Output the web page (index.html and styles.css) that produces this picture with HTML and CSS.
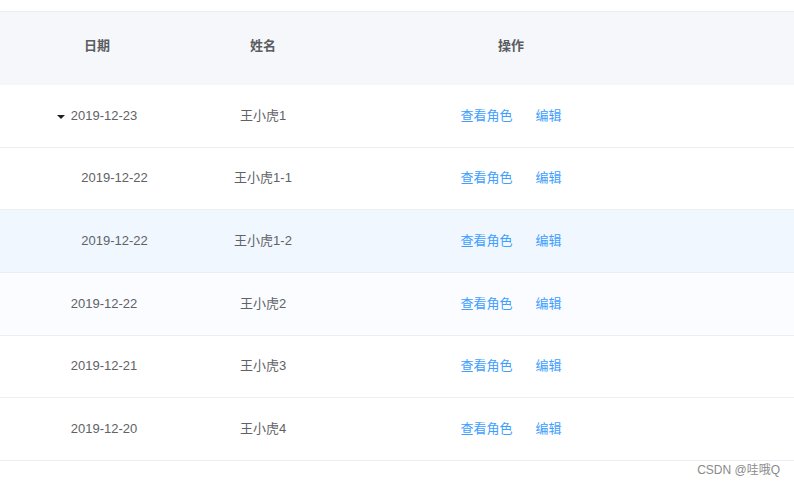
FILE: index.html
```html
<!DOCTYPE html>
<html lang="zh">
<head>
<meta charset="utf-8">
<link rel="stylesheet" href="styles.css">
</head>
<body>
<div class="table">
  <div class="row head">
    <div class="cell">日期</div>
    <div class="cell">姓名</div>
    <div class="cell">操作</div>
    <div class="cell"></div>
  </div>
  <div class="row">
    <div class="cell"><span class="lead"><span class="caret"></span></span><span class="date">2019-12-23</span></div>
    <div class="cell">王小虎1</div>
    <div class="cell ops"><a>查看角色</a><a>编辑</a></div>
    <div class="cell"></div>
  </div>
  <div class="row short">
    <div class="cell"><span class="indent"></span><span class="lead"></span><span class="date">2019-12-22</span></div>
    <div class="cell">王小虎1-1</div>
    <div class="cell ops"><a>查看角色</a><a>编辑</a></div>
    <div class="cell"></div>
  </div>
  <div class="row hover">
    <div class="cell"><span class="indent"></span><span class="lead"></span><span class="date">2019-12-22</span></div>
    <div class="cell">王小虎1-2</div>
    <div class="cell ops"><a>查看角色</a><a>编辑</a></div>
    <div class="cell"></div>
  </div>
  <div class="row stripe">
    <div class="cell"><span class="lead"></span><span class="date">2019-12-22</span></div>
    <div class="cell">王小虎2</div>
    <div class="cell ops"><a>查看角色</a><a>编辑</a></div>
    <div class="cell"></div>
  </div>
  <div class="row short">
    <div class="cell"><span class="lead"></span><span class="date">2019-12-21</span></div>
    <div class="cell">王小虎3</div>
    <div class="cell ops"><a>查看角色</a><a>编辑</a></div>
    <div class="cell"></div>
  </div>
  <div class="row">
    <div class="cell"><span class="lead"></span><span class="date">2019-12-20</span></div>
    <div class="cell">王小虎4</div>
    <div class="cell ops"><a>查看角色</a><a>编辑</a></div>
    <div class="cell"></div>
  </div>
</div>
<div class="mark">CSDN @哇哦Q</div>
</body>
</html>
```
FILE: styles.css
```css
html, body {
  margin: 0;
  padding: 0;
  background: #fff;
}
body {
  font-family: "Liberation Sans", "Noto Sans CJK SC", sans-serif;
  font-size: 13px;
  color: #606266;
  position: relative;
  width: 794px;
  height: 484px;
  overflow: hidden;
}
.table {
  margin-top: 11px;
  border-top: 1px solid #ebeef5;
}
.row {
  display: grid;
  grid-template-columns: 194px 138px 358px 1fr;
  height: 62px;
  border-bottom: 1px solid #ebeef5;
}
.row.short {
  height: 61px;
}
.row.head {
  height: 73px;
  background: #f5f7fa;
  font-weight: bold;
  color: #5a5c61;
  border-bottom: none;
}
.row.head .cell {
  padding-bottom: 6px;
}
.row.hover { background: #f0f7ff; }
.row.stripe { background: #fafcff; }
.cell {
  display: flex;
  align-items: center;
  justify-content: center;
  padding-bottom: 1px;
  line-height: 16px;
}
.lead {
  display: inline-flex;
  width: 14px;
  height: 16px;
  align-items: center;
}
.indent {
  display: inline-block;
  width: 21px;
}
.caret {
  width: 0;
  height: 0;
  border-left: 4px solid transparent;
  border-right: 4px solid transparent;
  border-top: 4.5px solid #1f1f1f;
  margin-left: 0;
  margin-top: 2px;
}
.ops {
  gap: 23px;
}
.ops a {
  color: #409eff;
  cursor: pointer;
}
.mark {
  position: absolute;
  right: 14px;
  top: 460px;
  font-size: 12px;
  color: #8a8a8a;
}
```
